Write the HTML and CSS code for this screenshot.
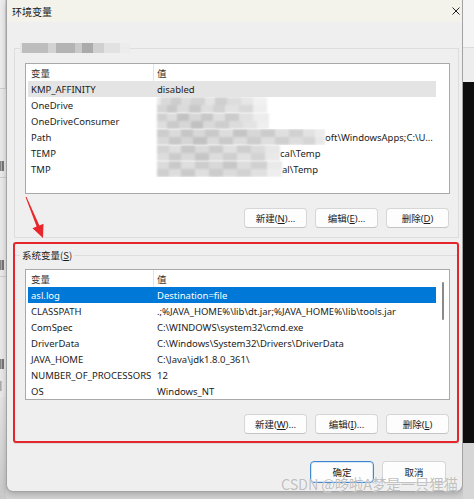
FILE: index.html
```html
<!DOCTYPE html>
<html lang="zh-CN">
<head>
<meta charset="utf-8">
<title>环境变量</title>
<link rel="stylesheet" href="styles.css">
</head>
<body>
<div class="desk">
  <div class="side-left">
    <div class="sl-a"></div>
    <div class="sl-line"></div>
    <div class="sl-b"></div>
    <div class="sl-mark"></div>
    <div class="sl-line"></div>
    <div class="sl-c"></div>
    <div class="sl-mark"></div>
    <div class="sl-line"></div>
    <div class="sl-c"></div>
    <div class="sl-mark"></div>
    <div class="sl-mark sl-mark-thin"></div>
    <div class="sl-d"></div>
  </div>

  <div class="dialog">
    <div class="titlebar">
      <span class="title">环境变量</span>
      <span class="close"><svg width="8" height="8" viewBox="0 0 8 8"><path d="M0.5 0.5 L7.5 7.5 M7.5 0.5 L0.5 7.5" stroke="#222" stroke-width="1" fill="none"/></svg></span>
    </div>
    <div class="dlg-body">
      <fieldset class="group group-user">
        <legend class="legend legend-blur"><span class="mosaic-label"></span></legend>
        <div class="list">
          <div class="list-main">
            <div class="row row-head"><span class="cell">变量</span><span class="cell">值</span></div>
            <div class="row row-inactive"><span class="cell">KMP_AFFINITY</span><span class="cell">disabled</span></div>
            <div class="row"><span class="cell">OneDrive</span><span class="cell"><span class="mosaic m1"></span></span></div>
            <div class="row"><span class="cell">OneDriveConsumer</span><span class="cell"><span class="mosaic m2"></span></span></div>
            <div class="row"><span class="cell">Path</span><span class="cell"><span class="mosaic m3"></span>oft\WindowsApps;C:\U...</span></div>
            <div class="row"><span class="cell">TEMP</span><span class="cell"><span class="mosaic m4"></span>cal\Temp</span></div>
            <div class="row"><span class="cell">TMP</span><span class="cell"><span class="mosaic m5"></span>al\Temp</span></div>
          </div>
          <div class="list-scroll"></div>
        </div>
        <div class="btn-row">
          <button class="btn">新建(<u>N</u>)...</button>
          <button class="btn">编辑(<u>E</u>)...</button>
          <button class="btn">删除(<u>D</u>)</button>
        </div>
      </fieldset>

      <fieldset class="group group-sys">
        <legend class="legend">系统变量(<u>S</u>)</legend>
        <div class="list">
          <div class="list-main">
            <div class="row row-head"><span class="cell">变量</span><span class="cell">值</span></div>
            <div class="row row-selected"><span class="cell">asl.log</span><span class="cell">Destination=file</span></div>
            <div class="row"><span class="cell">CLASSPATH</span><span class="cell">.;%JAVA_HOME%\lib\dt.jar;%JAVA_HOME%\lib\tools.jar</span></div>
            <div class="row"><span class="cell">ComSpec</span><span class="cell">C:\WINDOWS\system32\cmd.exe</span></div>
            <div class="row"><span class="cell">DriverData</span><span class="cell">C:\Windows\System32\Drivers\DriverData</span></div>
            <div class="row"><span class="cell">JAVA_HOME</span><span class="cell">C:\Java\jdk1.8.0_361\</span></div>
            <div class="row"><span class="cell">NUMBER_OF_PROCESSORS</span><span class="cell">12</span></div>
            <div class="row"><span class="cell">OS</span><span class="cell">Windows_NT</span></div>
          </div>
          <div class="list-scroll"><div class="thumb"></div></div>
        </div>
        <div class="btn-row">
          <button class="btn">新建(<u>W</u>)...</button>
          <button class="btn">编辑(<u>I</u>)...</button>
          <button class="btn">删除(<u>L</u>)</button>
        </div>
      </fieldset>

      <div class="footer-row">
        <button class="btn btn-wide btn-default">确定</button>
        <button class="btn btn-wide">取消</button>
      </div>
    </div>
  </div>

  <div class="side-right">
    <div class="sr-top"></div>
    <div class="sr-mid"></div>
    <div class="sr-black"></div>
    <div class="sr-bottom"></div>
  </div>

  <div class="red-box"></div>
  <svg class="red-arrow" width="60" height="60" viewBox="0 0 60 60">
    <polygon points="5.6,7.2 6.4,6.8 19.4,35.4 23.5,33.7 23,48 12.5,38.3 16.6,36.6" fill="#e8262b"/>
  </svg>
  <div class="watermark">CSDN @哆啦A梦是一只狸猫</div>
</div>
</body>
</html>
```

FILE: styles.css
```css
* { box-sizing: border-box; }
html, body { margin: 0; padding: 0; }
body {
  width: 474px;
  height: 499px;
  overflow: hidden;
  background: #d2d2d2;
  font-family: "Noto Sans", "Noto Sans CJK SC", sans-serif;
  font-size: 9.5px;
  color: #1c1c1c;
}
.desk {
  position: relative;
  display: flex;
  align-items: flex-start;
  width: 474px;
  height: 499px;
}

/* background windows */
.side-left {
  width: 6px;
  height: 499px;
  background: #e9e9e9;
  display: flex;
  flex-direction: column;
  overflow: hidden;
}
.sl-a { height: 88px; background: #ececec; border-right: 1px solid #d4d4d4; }
.sl-line { height: 1px; background: #cfcfcf; }
.sl-b { height: 66px; }
.sl-c { height: 76px; }
.sl-mark {
  height: 10px;
  width: 4px;
  margin: 6px 0;
  background: linear-gradient(90deg, #6a6a6a 0 1px, #9a9a9a 1px 2px, #555 2px 4px);
  opacity: 0.8;
}
.sl-mark-thin { width: 2px; opacity: 0.5; }
.sl-d { flex: 1; background: linear-gradient(#e4e4e4, #c9c9c9); }

.side-right {
  flex: 1;
  height: 499px;
  display: flex;
  flex-direction: column;
}
.sr-top { height: 48px; background: #f4f4f4; border-bottom: 1px solid #dcdcdc; }
.sr-mid { height: 34px; background: #ededed; }
.sr-black { height: 361px; background: #0e0e0e; }
.sr-bottom { flex: 1; background: #d6d6d6; }

/* dialog */
.dialog {
  width: 457px;
  height: 492px;
  background: #efefef;
  border: 1px solid #a3a3a3;
  border-top: none;
  border-radius: 0 0 7px 7px;
  box-shadow: 0 2px 6px rgba(0, 0, 0, 0.22);
  display: flex;
  flex-direction: column;
  overflow: hidden;
}
.titlebar {
  height: 22px;
  flex: none;
  background: #f4f3eb;
  display: flex;
  align-items: center;
  justify-content: space-between;
  padding: 0 0 0 5px;
}
.title {
  font-family: "Noto Sans CJK SC", sans-serif;
  font-size: 10px;
  color: #1a1a1a;
}
.close {
  width: 12px;
  height: 12px;
  display: flex;
  align-items: center;
  justify-content: center;
}
.dlg-body {
  flex: 1;
  display: flex;
  flex-direction: column;
  padding: 0 3px 0 7px;
}

/* group boxes */
.group {
  margin: 0;
  border: 1px solid #dddddd;
  padding: 8px 8px 9px 10px;
  min-width: 0;
}
.group-user { margin-top: 19px; }
.group-sys { margin-top: 10px; padding-top: 7px; }
.legend {
  padding: 0 2px;
  margin-left: -5px;
  line-height: 14px;
  font-family: "Noto Sans CJK SC", sans-serif;
  font-size: 9.5px;
  color: #1a1a1a;
}
.legend-blur { padding: 0; margin-left: -5px; }
.mosaic-label {
  display: block;
  width: 110px;
  height: 14px;
  background:
    linear-gradient(90deg, #e6e6e6 0 2px, #bdbdbd 2px 28px, #d2d2d2 28px 36px, #b3b3b3 36px 55px, #cacaca 55px 62px, #ababab 62px 73px, #d0d0d0 73px 84px, #e2e2e2 84px 100px, #ececec 100px) 0 2px / 100% 10px no-repeat;
  filter: blur(0.7px);
}

/* list views */
.list {
  height: 131px;
  border: 1px solid #a9a9a9;
  background: #ffffff;
  display: flex;
  padding-left: 2px;
  overflow: hidden;
}
.list-main { flex: 1; min-width: 0; }
.list-scroll { width: 13px; flex: none; }
.thumb {
  width: 2px;
  height: 38px;
  margin: 12px 0 0 6px;
  background: #8a8a8a;
  border-radius: 1px;
}
.row {
  display: grid;
  grid-template-columns: 126px 1fr;
  height: 16px;
  align-items: center;
  white-space: nowrap;
}
.cell {
  padding-left: 3px;
  overflow: hidden;
  display: flex;
  align-items: center;
  height: 100%;
}
.row-head { height: 17px; }
.row-head .cell {
  font-family: "Noto Sans CJK SC", sans-serif;
  color: #333;
}
.row-head .cell:first-child { border-right: 1px solid #e4e4e4; }
.row-inactive { background: #e4e4e4; }
.row-selected { background: #0078d7; color: #ffffff; }

/* pixelated (blurred) values */
.mosaic {
  display: inline-block;
  height: 16px;
  flex: none;
  filter: blur(0.8px);
}
.m1 {
  width: 110px;
  background:
    linear-gradient(90deg, #e9e9e9 0 4px, #d9d9d9 4px 14px, #cdcdcd 14px 24px, #dcdcdc 24px 34px, #d3d3d3 34px 48px, #e4e4e4 48px 58px, #cfcfcf 58px 70px, #dddddd 70px 84px, #e6e6e6 84px 96px, #f1f1f1 96px) top / 100% 50% no-repeat,
    linear-gradient(90deg, #d5d5d5 0 10px, #c8c8c8 10px 20px, #dbdbdb 20px 32px, #c9c9c9 32px 44px, #dedede 44px 56px, #d2d2d2 56px 68px, #e2e2e2 68px 82px, #d9d9d9 82px 96px, #eeeeee 96px) bottom / 100% 50% no-repeat;
}
.m2 {
  width: 112px;
  background:
    linear-gradient(90deg, #d0d0d0 0 10px, #dddddd 10px 20px, #c3c3c3 20px 32px, #d7d7d7 32px 44px, #c8c8c8 44px 56px, #dfdfdf 56px 68px, #cccccc 68px 82px, #e1e1e1 82px 96px, #ededed 96px) top / 100% 50% no-repeat,
    linear-gradient(90deg, #dedede 0 10px, #cacaca 10px 22px, #d6d6d6 22px 34px, #c1c1c1 34px 46px, #d9d9d9 46px 58px, #cecece 58px 72px, #dcdcdc 72px 86px, #e3e3e3 86px 100px, #efefef 100px) bottom / 100% 50% no-repeat;
}
.m3 {
  width: 168px;
  background:
    linear-gradient(90deg, #cdcdcd 0 12px, #dbdbdb 12px 24px, #c6c6c6 24px 36px, #d8d8d8 36px 48px, #c9c9c9 48px 62px, #dddddd 62px 76px, #c5c5c5 76px 90px, #d7d7d7 90px 104px, #cbcbcb 104px 118px, #dfdfdf 118px 132px, #d1d1d1 132px 146px, #e2e2e2 146px 158px, #ececec 158px) top / 100% 50% no-repeat,
    linear-gradient(90deg, #d9d9d9 0 12px, #c8c8c8 12px 24px, #d5d5d5 24px 36px, #c2c2c2 36px 50px, #dadada 50px 62px, #cacaca 62px 76px, #dcdcdc 76px 90px, #cdcdcd 90px 104px, #dedede 104px 118px, #cfcfcf 118px 132px, #dddddd 132px 146px, #d5d5d5 146px 158px, #e8e8e8 158px) bottom / 100% 50% no-repeat;
}
.m4 {
  width: 123px;
  background:
    linear-gradient(90deg, #d3d3d3 0 12px, #dfdfdf 12px 24px, #c8c8c8 24px 38px, #dadada 38px 52px, #cccccc 52px 66px, #e0e0e0 66px 80px, #cecece 80px 94px, #dbdbdb 94px 108px, #e7e7e7 108px) top / 100% 50% no-repeat,
    linear-gradient(90deg, #dddddd 0 12px, #cbcbcb 12px 24px, #d9d9d9 24px 38px, #c6c6c6 38px 52px, #dcdcdc 52px 66px, #cfcfcf 66px 80px, #e1e1e1 80px 94px, #d3d3d3 94px 108px, #e9e9e9 108px) bottom / 100% 50% no-repeat;
}
.m5 {
  width: 125px;
  background:
    linear-gradient(90deg, #dbdbdb 0 12px, #c9c9c9 12px 24px, #dedede 24px 38px, #cdcdcd 38px 52px, #d8d8d8 52px 66px, #c7c7c7 66px 80px, #dddddd 80px 94px, #d1d1d1 94px 110px, #eaeaea 110px) top / 100% 50% no-repeat,
    linear-gradient(90deg, #cfcfcf 0 12px, #dddddd 12px 24px, #cacaca 24px 38px, #dfdfdf 38px 52px, #cccccc 52px 66px, #dbdbdb 66px 80px, #d2d2d2 80px 94px, #e0e0e0 94px 110px, #eeeeee 110px) bottom / 100% 50% no-repeat;
}

/* buttons */
.btn-row {
  display: flex;
  justify-content: flex-end;
  gap: 8px;
  margin-top: 14px;
  padding-right: 1px;
}
.btn {
  width: 63px;
  height: 20px;
  padding: 0;
  border: 1px solid #d6d6d6;
  border-bottom-color: #c4c4c4;
  border-radius: 4px;
  background: #fdfdfd;
  font-family: "Noto Sans", "Noto Sans CJK SC", sans-serif;
  font-size: 9.5px;
  color: #1c1c1c;
  display: flex;
  align-items: center;
  justify-content: center;
}
.btn u { text-underline-offset: 1px; }
.footer-row {
  display: flex;
  justify-content: flex-end;
  gap: 8px;
  margin-top: 17px;
  padding-right: 13px;
}
.btn-wide { width: 64px; height: 22px; }
.btn-default {
  border: 1px solid #3f88cf;
  box-shadow: inset 0 0 0 1px #d6e6f5;
}

/* annotations over the screenshot */
.red-box {
  position: absolute;
  left: 13px;
  top: 242px;
  width: 446px;
  height: 201px;
  border: 2px solid #e5262c;
  border-radius: 3px;
}
.red-arrow {
  position: absolute;
  left: 20px;
  top: 190px;
}
.watermark {
  position: absolute;
  left: 281px;
  top: 474px;
  font-family: "Noto Sans CJK SC", sans-serif;
  font-size: 14.5px;
  line-height: 20px;
  letter-spacing: -0.2px;
  color: rgba(180, 180, 180, 0.85);
  text-shadow: 0 0 1px rgba(255, 255, 255, 0.9);
  white-space: nowrap;
}
```
